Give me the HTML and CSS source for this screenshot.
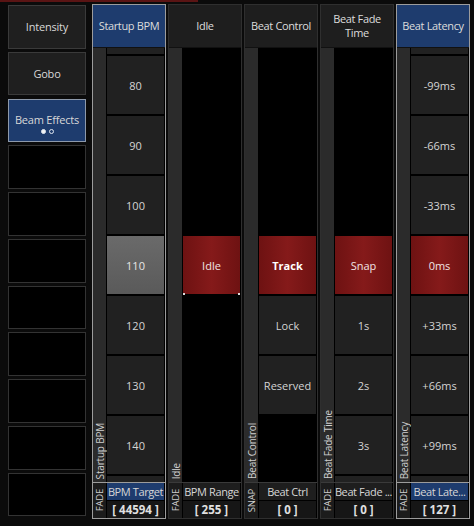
FILE: index.html
```html
<!DOCTYPE html>
<html>
<head>
<meta charset="utf-8">
<link rel="stylesheet" href="styles.css">
</head>
<body>
<div class="topbar"></div>
<div class="main">
  <div class="side">
    <div class="btn">Intensity</div>
    <div class="btn">Gobo</div>
    <div class="btn active">Beam Effects<div class="dots"><span class="dot on"></span><span class="dot"></span></div></div>
    <div class="btn empty"></div>
    <div class="btn empty"></div>
    <div class="btn empty"></div>
    <div class="btn empty"></div>
    <div class="btn empty"></div>
    <div class="btn empty"></div>
    <div class="btn empty"></div>
    <div class="btn empty"></div>
  </div>

  <div class="col sel">
    <div class="head">Startup BPM</div>
    <div class="body">
      <div class="strip"><span class="vt">Startup BPM</span></div>
      <div class="list">
        <div class="cell part"></div>
        <div class="cell">80</div>
        <div class="cell">90</div>
        <div class="cell">100</div>
        <div class="cell cur">110</div>
        <div class="cell">120</div>
        <div class="cell">130</div>
        <div class="cell">140</div>
        <div class="cell rest"></div>
      </div>
    </div>
    <div class="foot">
      <div class="mode"><span class="vt">FADE</span></div>
      <div class="label">BPM Target</div>
      <div class="val">[ 44594 ]</div>
    </div>
  </div>

  <div class="col">
    <div class="head">Idle</div>
    <div class="body">
      <div class="strip"><span class="vt">Idle</span></div>
      <div class="list">
        <div class="cell part none"></div>
        <div class="cell none"></div>
        <div class="cell none"></div>
        <div class="cell none"></div>
        <div class="cell red corner">Idle</div>
        <div class="cell none"></div>
        <div class="cell none"></div>
        <div class="cell none"></div>
        <div class="cell rest none"></div>
      </div>
    </div>
    <div class="foot">
      <div class="mode"><span class="vt">FADE</span></div>
      <div class="label">BPM Range</div>
      <div class="val">[ 255 ]</div>
    </div>
  </div>

  <div class="col">
    <div class="head">Beat Control</div>
    <div class="body">
      <div class="strip"><span class="vt">Beat Control</span></div>
      <div class="list">
        <div class="cell part none"></div>
        <div class="cell none"></div>
        <div class="cell none"></div>
        <div class="cell none"></div>
        <div class="cell red bold">Track</div>
        <div class="cell">Lock</div>
        <div class="cell">Reserved</div>
        <div class="cell none"></div>
        <div class="cell rest none"></div>
      </div>
    </div>
    <div class="foot">
      <div class="mode"><span class="vt">SNAP</span></div>
      <div class="label">Beat Ctrl</div>
      <div class="val">[ 0 ]</div>
    </div>
  </div>

  <div class="col">
    <div class="head">Beat Fade Time</div>
    <div class="body">
      <div class="strip"><span class="vt">Beat Fade Time</span></div>
      <div class="list">
        <div class="cell part none"></div>
        <div class="cell none"></div>
        <div class="cell none"></div>
        <div class="cell none"></div>
        <div class="cell red">Snap</div>
        <div class="cell">1s</div>
        <div class="cell">2s</div>
        <div class="cell">3s</div>
        <div class="cell rest"></div>
      </div>
    </div>
    <div class="foot">
      <div class="mode"><span class="vt">FADE</span></div>
      <div class="label">Beat Fade ...</div>
      <div class="val">[ 0 ]</div>
    </div>
  </div>

  <div class="col sel">
    <div class="head">Beat Latency</div>
    <div class="body">
      <div class="strip"><span class="vt">Beat Latency</span></div>
      <div class="list">
        <div class="cell part"></div>
        <div class="cell">-99ms</div>
        <div class="cell">-66ms</div>
        <div class="cell">-33ms</div>
        <div class="cell red">0ms</div>
        <div class="cell">+33ms</div>
        <div class="cell">+66ms</div>
        <div class="cell">+99ms</div>
        <div class="cell rest"></div>
      </div>
    </div>
    <div class="foot">
      <div class="mode"><span class="vt">FADE</span></div>
      <div class="label">Beat Late...</div>
      <div class="val">[ 127 ]</div>
    </div>
  </div>
</div>
</body>
</html>
```

FILE: styles.css
```css
* { box-sizing: border-box; }
html, body {
  margin: 0;
  padding: 0;
  background: #0b0b0b;
  width: 474px;
  height: 526px;
  overflow: hidden;
  font-family: "Open Sans", "Noto Sans", sans-serif;
  font-size: 11px;
  color: #d6d6d6;
}
.topbar {
  width: 198px;
  height: 2px;
  background: #5a1414;
}
.main {
  display: flex;
  align-items: flex-start;
  padding: 2px 4px 0 8px;
  gap: 2px;
}
.side {
  width: 78px;
  margin-right: 4px;
  padding-top: 1px;
  display: grid;
  grid-template-rows: repeat(11, 43.6px);
  row-gap: 3.2px;
}
.btn {
  background: #1f1f1f;
  border: 1px solid #3a3a3a;
  display: flex;
  flex-direction: column;
  align-items: center;
  justify-content: center;
  font-size: 11px;
  letter-spacing: -0.2px;
  color: #d8d8d8;
}
.btn.empty {
  background: #000;
  border-color: #333;
}
.btn.active {
  background: #1e3c6e;
  border-color: #8d99ab;
  padding-top: 5px;
}
.dots {
  display: flex;
  gap: 3px;
  margin-top: 2px;
}
.dot {
  width: 5px;
  height: 5px;
  border-radius: 50%;
  border: 1px solid #dfe6f0;
}
.dot.on { background: #f2f2f2; }

.col {
  width: 74px;
  height: 515px;
  border: 1px solid #2f2f2f;
  background: #000;
  display: flex;
  flex-direction: column;
}
.col.sel { border-color: #9c9c9c; }
.head {
  height: 43px;
  flex: none;
  background: #1e1e1e;
  border-bottom: 1px solid #111;
  display: flex;
  align-items: center;
  justify-content: center;
  text-align: center;
  padding: 0 2px;
  line-height: 14px;
  letter-spacing: -0.35px;
  color: #dcdcdc;
}
.sel .head { background: #1e3c6e; }
.body {
  flex: 1;
  display: flex;
  gap: 1px;
  min-height: 0;
}
.strip {
  width: 13px;
  flex: none;
  background: #2b2b2b;
  display: flex;
  flex-direction: column;
  justify-content: flex-end;
  align-items: center;
  padding-bottom: 3px;
}
.vt {
  writing-mode: vertical-rl;
  transform: rotate(180deg);
  font-size: 10px;
  line-height: 12px;
  letter-spacing: -0.2px;
  color: #cfcfcf;
  white-space: nowrap;
}
.list {
  flex: 1;
  margin-right: 1px;
  display: flex;
  flex-direction: column;
  gap: 2px;
  overflow: hidden;
}
.cell {
  height: 58px;
  flex: none;
  background: #212121;
  display: flex;
  align-items: center;
  justify-content: center;
  font-size: 11px;
  color: #d4d4d4;
}
.cell.part { height: 6px; }
.cell.rest { flex: 1; height: auto; }
.cell.none { background: transparent; }
.cell.cur {
  background: linear-gradient(#6a6a6a, #5a5a5a);
  color: #e6e6e6;
}
.cell.red {
  background: linear-gradient(90deg, #6e1212, #851a1a 50%, #6e1212);
  color: #f1e4e4;
}
.cell.bold { font-weight: bold; color: #fff; }
.cell.corner { position: relative; }
.cell.corner::before,
.cell.corner::after {
  content: "";
  position: absolute;
  bottom: -1px;
  width: 2px;
  height: 2px;
  background: #ddd;
}
.cell.corner::before { left: 0; }
.cell.corner::after { right: 0; }

.foot {
  height: 36px;
  flex: none;
  border-top: 1px solid #3a3a3a;
  display: grid;
  grid-template-columns: 13px 1fr;
  grid-template-rows: 17px 17px;
  column-gap: 1px;
  row-gap: 1px;
}
.sel .foot { border-top-color: #9c9c9c; }
.mode {
  grid-row: 1 / 3;
  background: #1c1c1c;
  display: flex;
  align-items: center;
  justify-content: center;
}
.mode .vt { font-size: 9.5px; }
.label {
  background: #1e1e1e;
  display: flex;
  align-items: center;
  justify-content: center;
  white-space: nowrap;
  overflow: hidden;
  font-size: 11px;
  letter-spacing: -0.4px;
  margin-right: 1px;
}
.sel .label { background: #1e3c6e; }
.val {
  background: #161616;
  display: flex;
  align-items: center;
  justify-content: center;
  font-weight: bold;
  font-size: 11.5px;
  color: #e0e0e0;
  white-space: pre;
  margin-right: 1px;
}
```
